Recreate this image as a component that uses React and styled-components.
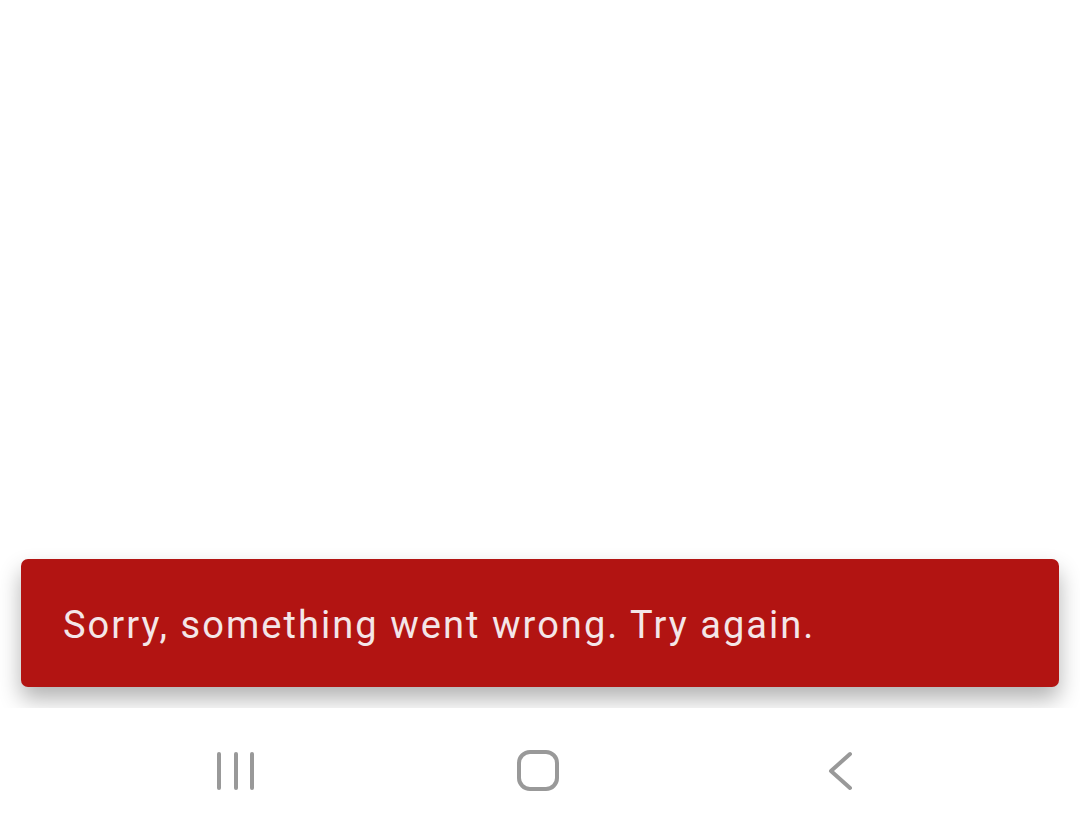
import styled, { createGlobalStyle } from "styled-components";

const GlobalStyle = createGlobalStyle`
    html, body {
        margin: 0;
        padding: 0;
        background: #ffffff;
    }
    #root {
        height: 834px;
    }
`;

export default function App(){
    return(
        <>
            <GlobalStyle />
            <Screen>
                <Content />
                <SnackArea>
                    <Snackbar>
                        <Message>Sorry, something went wrong. Try again.</Message>
                    </Snackbar>
                </SnackArea>
                <NavBar>
                    <NavButton>
                        <svg width="40" height="40" viewBox="0 0 40 40" fill="none" stroke="#999999" strokeWidth="4" strokeLinecap="round">
                            <line x1="3" y1="3" x2="3" y2="37" />
                            <line x1="20" y1="3" x2="20" y2="37" />
                            <line x1="36" y1="3" x2="36" y2="37" />
                        </svg>
                    </NavButton>
                    <NavButton>
                        <svg width="44" height="42" viewBox="0 0 44 42" fill="none" stroke="#999999" strokeWidth="4">
                            <rect x="3" y="2" width="38" height="37" rx="11" />
                        </svg>
                    </NavButton>
                    <NavButton>
                        <svg width="28" height="40" viewBox="0 0 28 40" fill="none" stroke="#999999" strokeWidth="4" strokeLinecap="round" strokeLinejoin="round">
                            <polyline points="24,3 5,20 24,37" />
                        </svg>
                    </NavButton>
                </NavBar>
            </Screen>
        </>
    );
}

const Screen = styled.div`
    width: 1080px;
    height: 834px;
    display: flex;
    flex-direction: column;
    background: #ffffff;
    overflow: hidden;
`;

const Content = styled.div`
    flex: 1;
`;

const SnackArea = styled.div`
    padding: 0 21px 21px 21px;
`;

const Snackbar = styled.div`
    height: 128px;
    display: flex;
    align-items: center;
    padding: 0 42px;
    background: #b21412;
    border-radius: 7px;
    box-shadow: 0 12px 22px rgba(0, 0, 0, 0.3);
`;

const Message = styled.p`
    margin: 0;
    padding-top: 3px;
    font-family: 'Roboto', sans-serif;
    font-weight: 400;
    font-size: 38px;
    letter-spacing: 2.05px;
    color: #f4e6e8;
`;

const NavBar = styled.div`
    position: relative;
    z-index: 1;
    height: 126px;
    display: grid;
    grid-template-columns: repeat(3, 302px);
    justify-content: center;
    align-items: center;
    padding-right: 4px;
    background: #ffffff;
`;

const NavButton = styled.div`
    display: flex;
    justify-content: center;
    align-items: center;
`;
